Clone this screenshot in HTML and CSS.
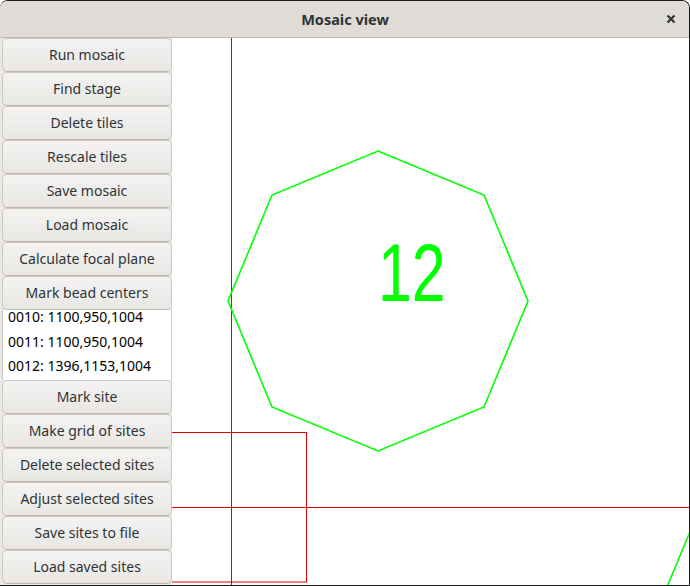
FILE: index.html
```html
<!DOCTYPE html>
<html>
<head>
<meta charset="utf-8">
<link rel="stylesheet" href="styles.css">
</head>
<body>
<div class="window">
  <header class="titlebar">
    <span class="title">Mosaic view</span>
    <span class="close">
      <svg width="10" height="10" viewBox="0 0 10 10"><path d="M1.5 1.5 L8.5 8.5 M8.5 1.5 L1.5 8.5" stroke="#2e3436" stroke-width="2.2" stroke-linecap="butt"/></svg>
    </span>
  </header>
  <div class="main">
    <div class="sidebar">
      <button class="btn">Run mosaic</button>
      <button class="btn">Find stage</button>
      <button class="btn">Delete tiles</button>
      <button class="btn">Rescale tiles</button>
      <button class="btn">Save mosaic</button>
      <button class="btn">Load mosaic</button>
      <button class="btn">Calculate focal plane</button>
      <button class="btn">Mark bead centers</button>
      <div class="list">
        <div class="list-inner">
          <div class="item">0010: 1100,950,1004</div>
          <div class="item">0011: 1100,950,1004</div>
          <div class="item">0012: 1396,1153,1004</div>
        </div>
      </div>
      <button class="btn">Mark site</button>
      <button class="btn">Make grid of sites</button>
      <button class="btn">Delete selected sites</button>
      <button class="btn">Adjust selected sites</button>
      <button class="btn">Save sites to file</button>
      <button class="btn">Load saved sites</button>
    </div>
    <svg class="canvas" width="517" height="547" viewBox="0 0 517 547">
      <line x1="59.5" y1="0" x2="59.5" y2="547" stroke="#e00000" stroke-width="1"/>
      <line x1="0" y1="469.5" x2="517" y2="469.5" stroke="#e00000" stroke-width="1"/>
      <rect x="-20" y="394.5" width="154.5" height="149.5" fill="none" stroke="#e00000" stroke-width="1"/>
      <polygon points="206,113 312,157 356,263 312,369 206,413 100,369 56,263 100,157" fill="none" stroke="#00ff00" stroke-width="1.6"/>
      <polygon points="623,452 729,496 773,602 729,708 623,752 517,708 473,602 517,496" fill="none" stroke="#00ff00" stroke-width="1.6"/>
      <text class="label" x="0" y="0" transform="translate(206 263) scale(0.75 1)">12</text>
    </svg>
  </div>
</div>
</body>
</html>
```
FILE: styles.css
```css
html, body {
  margin: 0;
  padding: 0;
  background: #ffffff;
}
.window {
  width: 690px;
  height: 586px;
  box-sizing: border-box;
  border-top: 1px solid #1c1c1c;
  border-right: 1px solid #1c1c1c;
  border-bottom: 1px solid #1c1c1c;
  border-radius: 8px 8px 0 0;
  overflow: hidden;
  background: #ebe9e7;
  display: flex;
  flex-direction: column;
  font-family: "Noto Sans", sans-serif;
}
.titlebar {
  height: 36px;
  flex: none;
  background: #dfdcd8;
  border-bottom: 1px solid #bfb9b3;
  display: flex;
  align-items: center;
  justify-content: center;
  position: relative;
}
.title {
  font-weight: bold;
  font-size: 14.5px;
  color: #2e3436;
  padding-left: 1px;
  padding-bottom: 1px;
}
.close {
  position: absolute;
  right: 13px;
  top: 13px;
  width: 10px;
  height: 10px;
  display: flex;
}
.main {
  flex: 1;
  display: flex;
  min-height: 0;
}
.sidebar {
  width: 170px;
  padding-left: 2px;
  flex: none;
  display: flex;
  flex-direction: column;
  background: #ebe9e7;
}
.btn {
  height: 34px;
  box-sizing: border-box;
  margin: 0;
  padding: 0 0 2px 0;
  border: 1px solid #cdc7c2;
  border-bottom-color: #bdb6b0;
  border-radius: 5px;
  background: linear-gradient(#f4f3f2, #e9e7e4);
  font-family: "Noto Sans", sans-serif;
  font-size: 14px;
  color: #2e3436;
  text-align: center;
  flex: none;
}
.list {
  height: 70px;
  box-sizing: border-box;
  background: #ffffff;
  border: 1px solid #cdc7c2;
  border-top: none;
  border-bottom: none;
  overflow: hidden;
  flex: none;
}
.list-inner {
  margin-top: -5px;
  padding-left: 5px;
}
.item {
  height: 24.5px;
  line-height: 24.5px;
  font-size: 14px;
  color: #000000;
  white-space: nowrap;
}
.canvas {
  display: block;
  background: #ffffff;
  flex: none;
}
.label {
  font-family: "Liberation Sans", sans-serif;
  font-size: 81px;
  fill: #00ff00;
}
```
